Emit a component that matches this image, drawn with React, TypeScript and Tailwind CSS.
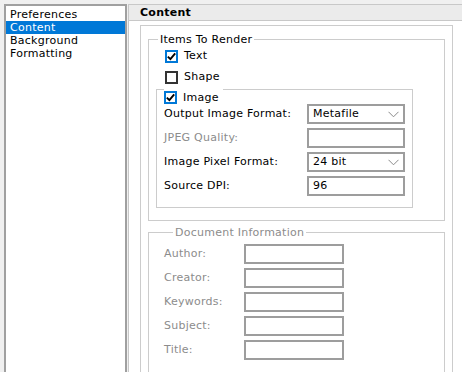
import type { ReactNode } from "react";

const SECTIONS = ["Preferences", "Content", "Background", "Formatting"];

const IMAGE_ROWS: { label: string; value: string; dropdown?: boolean; disabled?: boolean }[] = [
  { label: "Output Image Format:", value: "Metafile", dropdown: true },
  { label: "JPEG Quality:", value: "", disabled: true },
  { label: "Image Pixel Format:", value: "24 bit", dropdown: true },
  { label: "Source DPI:", value: "96" },
];

const DOC_FIELDS = ["Author:", "Creator:", "Keywords:", "Subject:", "Title:"];

function CheckBox({ checked, focused = false }: { checked: boolean; focused?: boolean }) {
  return (
    <span
      className={`flex h-[13px] w-[13px] shrink-0 items-center justify-center border-2 bg-white ${
        focused || checked ? "border-[#0078d7]" : "border-[#333333]"
      }`}
    >
      {checked && (
        <svg width="9" height="9" viewBox="0 0 9 9">
          <path d="M0.8 4.6 L3.4 7.2 L8.2 1.4" fill="none" stroke="#000" strokeWidth="1.9" />
        </svg>
      )}
    </span>
  );
}

function Chevron() {
  return (
    <svg width="11" height="7" viewBox="0 0 11 7" className="shrink-0">
      <path d="M0.5 0.8 L5.5 5.8 L10.5 0.8" fill="none" stroke="#8a8a8a" strokeWidth="1" />
    </svg>
  );
}

function Box({ value, dropdown, w }: { value: string; dropdown?: boolean; w: string }) {
  return (
    <div className={`flex h-[20px] ${w} items-center justify-between border-2 border-[#9d9d9d] bg-white pl-[4px] pr-[4px]`}>
      <span>{value}</span>
      {dropdown && <Chevron />}
    </div>
  );
}

function Group({ title, muted, children, className = "" }: { title: string; muted?: boolean; children: ReactNode; className?: string }) {
  return (
    <fieldset className={`w-[297px] border border-[#cccccc] ${className}`}>
      <legend className={`ml-[9px] px-[2px] leading-[13px] ${muted ? "text-[#8c8c8c]" : "text-black"}`}>{title}</legend>
      {children}
    </fieldset>
  );
}

export default function App() {
  return (
    <div className="flex h-[372px] w-[462px] overflow-hidden bg-[#f0f0f0] pl-[4px] pt-[4px] font-['DejaVu_Sans',sans-serif] text-[11px] tracking-[0.25px] text-black">
      <div className="h-[380px] w-[123px] shrink-0 border-2 border-[#a0a0a0] bg-white pt-[2px]">
        {SECTIONS.map((s) => (
          <div
            key={s}
            className={`h-[13px] pl-[4px] leading-[13px] ${s === "Content" ? "bg-[#0078d7] text-white" : ""}`}
          >
            {s}
          </div>
        ))}
      </div>

      <div className="ml-[1px] h-[380px] w-[400px] shrink-0 border-l border-t border-[#c8c8c8] bg-white">
        <div className="h-[16px] border-b border-[#c8c8c8] bg-[#ebebeb] pl-[11px] font-bold leading-[15px]">Content</div>

        <div className="ml-[11px] mt-[4px] h-[360px] w-[313px] border border-[#cccccc] pl-[7px] pt-[7px]">
          <Group title="Items To Render" className="pb-[12px]">
            <div className="pl-[16px]">
              <label className="flex h-[21px] items-center gap-[6px]">
                <CheckBox checked focused />
                <span>Text</span>
              </label>
              <label className="flex h-[21px] items-center gap-[6px]">
                <CheckBox checked={false} />
                <span>Shape</span>
              </label>
            </div>

            <div className="relative ml-[7px] mt-[1px] w-[257px] border border-[#cccccc] pb-[11px] pl-[7px] pt-[14px]">
              <label className="absolute left-[7px] top-[-2px] flex h-[16px] items-end gap-[6px] bg-white pr-[4px]">
                <CheckBox checked />
                <span className="leading-[13px]">Image</span>
              </label>
              <div className="flex flex-col gap-[4px]">
                {IMAGE_ROWS.map((r) => (
                  <div key={r.label} className="flex items-center">
                    <span className={`w-[143px] ${r.disabled ? "text-[#8c8c8c]" : ""}`}>{r.label}</span>
                    <Box value={r.value} dropdown={r.dropdown} w="w-[98px]" />
                  </div>
                ))}
              </div>
            </div>
          </Group>

          <Group title="Document Information" muted className="mt-[5px] h-[200px] pl-[15px] pt-[5px]">
            <div className="flex flex-col gap-[4px]">
              {DOC_FIELDS.map((f) => (
                <div key={f} className="flex items-center">
                  <span className="w-[80px] text-[#8c8c8c]">{f}</span>
                  <Box value="" w="w-[100px]" />
                </div>
              ))}
            </div>
          </Group>
        </div>
      </div>
    </div>
  );
}
